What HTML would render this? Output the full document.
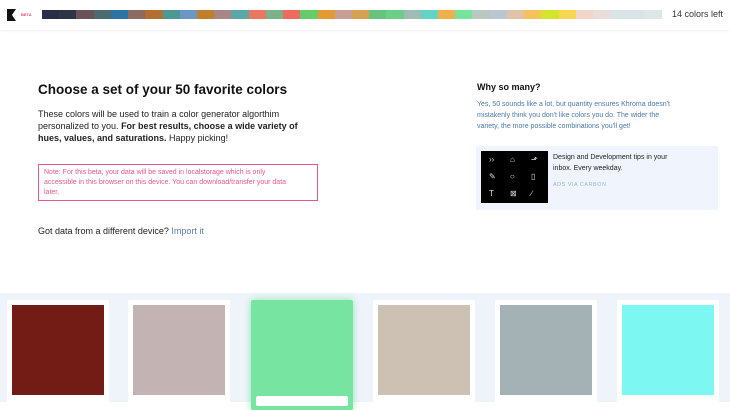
<!DOCTYPE html>
<html><head><style>
body{margin:0;width:730px;height:402px;overflow:hidden;background:#fff;font-family:"Liberation Sans",sans-serif;position:relative}
.top{position:absolute;left:0;top:0;width:730px;height:30px;background:#fff;box-shadow:0 1px 3px rgba(0,0,0,.06)}
.logo{position:absolute;left:7px;top:9px;width:9px;height:12px;background:#111;clip-path:polygon(0 0,100% 0,55% 50%,100% 100%,0 100%)}
.beta{position:absolute;left:21px;top:12px;font-size:4px;color:#e0457b;font-weight:bold}
.bar{position:absolute;left:42px;top:10px;width:620px;height:9px;display:flex}
.bar div{flex:1}
.left{position:absolute;left:672px;top:9px;font-size:9px;color:#333}
h1{position:absolute;left:38px;top:82px;margin:0;font-size:13.5px;font-weight:bold;color:#111}
.p{position:absolute;left:38px;top:108px;width:270px;font-size:9px;line-height:12px;color:#222}
.note{position:absolute;left:38px;top:164px;width:255px;height:28px;border:1px solid #e8578a;padding:3px 18px 4px 5px;font-size:7px;line-height:10px;color:#e8578a}
.got{position:absolute;left:38px;top:226px;font-size:9px;color:#222}
.got span{color:#5a7fa8}
.why{position:absolute;left:477px;top:82px;font-size:9px;font-weight:bold;color:#111}
.wp{position:absolute;left:477px;top:99px;width:200px;font-size:7px;line-height:11px;color:#4a7aa8}
.adt{position:absolute;left:553px;top:152px;font-size:7px;line-height:11px;color:#222;width:125px}
.ads{position:absolute;left:553px;top:182px;font-size:5.5px;letter-spacing:.5px;color:#9ab0cc}
.band{position:absolute;left:0;top:293px;width:730px;height:109px;background:#eff4fb}
.card{position:absolute;top:300px;width:102px;height:110px;background:#fff;border-radius:2px}
.card div{position:absolute;left:5px;top:5px;right:5px;height:90px}
</style></head><body>
<div class="top">
<div class="logo"></div><div class="beta">BETA</div>
<div class="bar">
<div style="background:#2a2d48"></div><div style="background:#2b3545"></div><div style="background:#6b5257"></div><div style="background:#4d6a70"></div><div style="background:#2c73a8"></div><div style="background:#8d6a62"></div><div style="background:#b26f33"></div><div style="background:#4b9993"></div><div style="background:#6c96c4"></div><div style="background:#c07f2a"></div><div style="background:#a98584"></div><div style="background:#5aa8a6"></div><div style="background:#e97761"></div><div style="background:#7ab38a"></div><div style="background:#ef6b5f"></div><div style="background:#66cc6b"></div><div style="background:#e29a33"></div><div style="background:#c79f96"></div><div style="background:#d4a251"></div><div style="background:#66c47f"></div><div style="background:#6ccf87"></div><div style="background:#9ebcb3"></div><div style="background:#62d3c5"></div><div style="background:#edb04a"></div><div style="background:#77e49c"></div><div style="background:#b8c7bf"></div><div style="background:#bac6d1"></div><div style="background:#e2c2a8"></div><div style="background:#f8c25a"></div><div style="background:#d2e52a"></div><div style="background:#f7d654"></div><div style="background:#f3d5ca"></div><div style="background:#e9dcda"></div><div style="background:#d9e4e6"></div><div style="background:#d9e4e6"></div><div style="background:#dde7e8"></div>
</div>
<div class="left">14 colors left</div>
</div>
<h1>Choose a set of your 50 favorite colors</h1>
<div class="p">These colors will be used to train a color generator algorthim personalized to you. <b>For best results, choose a wide variety of hues, values, and saturations.</b> Happy picking!</div>
<div class="note">Note: For this beta, your data will be saved in localstorage which is only accessible in this browser on this device. You can download/transfer your data later.</div>
<div class="got">Got data from a different device? <span>Import it</span></div>
<div class="why">Why so many?</div>
<div class="wp">Yes, 50 sounds like a lot, but quantity ensures Khroma doesn't mistakenly think you don't like colors you do. The wider the variety, the more possible combinations you'll get!</div>
<div style="position:absolute;left:476px;top:146px;width:242px;height:64px;background:#f0f5fd"></div>
<div style="position:absolute;left:481px;top:151px;width:67px;height:52px;background:#000;color:#ddd;font-size:8px;line-height:17px">
<div style="position:absolute;left:8px;top:0">››</div><div style="position:absolute;left:29px;top:0">⌂</div><div style="position:absolute;left:50px;top:0">⬏</div>
<div style="position:absolute;left:8px;top:17px">✎</div><div style="position:absolute;left:29px;top:17px">○</div><div style="position:absolute;left:50px;top:17px">▯</div>
<div style="position:absolute;left:8px;top:34px">T</div><div style="position:absolute;left:29px;top:34px">⊠</div><div style="position:absolute;left:50px;top:34px">∕</div>
</div>
<div class="adt">Design and Development tips in your inbox. Every weekday.</div>
<div class="ads">ADS VIA CARBON</div>
<div class="band"></div>
<div class="card" style="left:7px"><div style="background:#731b15"></div></div>
<div class="card" style="left:128px"><div style="background:#c3b3b3"></div></div>
<div class="card" style="left:251px;background:#78e4a1;box-shadow:0 0 8px rgba(120,228,161,.8)"><div style="left:5px;right:5px;top:96px;height:10px;background:#fff;border-radius:2px"></div></div>
<div class="card" style="left:373px"><div style="background:#cdc1b3"></div></div>
<div class="card" style="left:495px"><div style="background:#a4b1b5"></div></div>
<div class="card" style="left:617px"><div style="background:#7cf7f1"></div></div>
</body></html>
